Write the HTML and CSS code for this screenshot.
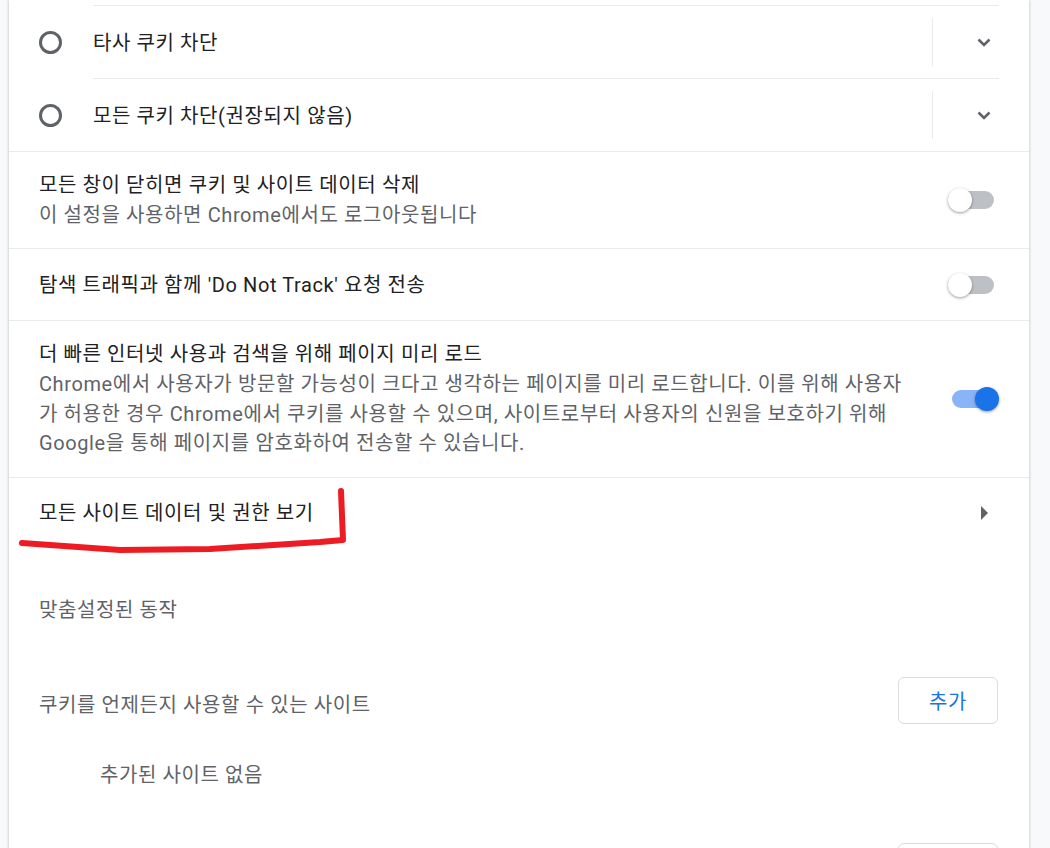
FILE: index.html
```html
<!DOCTYPE html>
<html lang="ko">
<head>
<meta charset="UTF-8">
<meta name="viewport" content="width=device-width, initial-scale=1.0">
<title>쿠키 및 기타 사이트 데이터</title>
<link rel="stylesheet" href="styles.css">
</head>
<body>
<div class="card">
  <div class="radio-row">
    <span class="radio"></span>
    <div class="radio-body">
      <div class="label">타사 쿠키 차단</div>
      <span class="sep"></span>
      <svg class="chevron" width="14" height="9" viewBox="0 0 14 9"><polyline points="1.5,1.5 7,7 12.5,1.5" fill="none" stroke="#5f6368" stroke-width="2.6"/></svg>
    </div>
  </div>
  <div class="radio-row">
    <span class="radio"></span>
    <div class="radio-body">
      <div class="label">모든 쿠키 차단(권장되지 않음)</div>
      <span class="sep"></span>
      <svg class="chevron" width="14" height="9" viewBox="0 0 14 9"><polyline points="1.5,1.5 7,7 12.5,1.5" fill="none" stroke="#5f6368" stroke-width="2.6"/></svg>
    </div>
  </div>

  <div class="row">
    <div class="text">
      <div>모든 창이 닫히면 쿠키 및 사이트 데이터 삭제</div>
      <div class="secondary">이 설정을 사용하면 Chrome에서도 로그아웃됩니다</div>
    </div>
    <div class="toggle"><span class="bar"></span><span class="knob"></span></div>
  </div>

  <div class="row">
    <div class="text">탐색 트래픽과 함께 'Do Not Track' 요청 전송</div>
    <div class="toggle"><span class="bar"></span><span class="knob"></span></div>
  </div>

  <div class="row">
    <div class="text wide">
      <div class="title">더 빠른 인터넷 사용과 검색을 위해 페이지 미리 로드</div>
      <div class="secondary">Chrome에서 사용자가 방문할 가능성이 크다고 생각하는 페이지를 미리 로드합니다. 이를 위해 사용자가 허용한 경우 Chrome에서 쿠키를 사용할 수 있으며, 사이트로부터 사용자의 신원을 보호하기 위해 Google을 통해 페이지를 암호화하여 전송할 수 있습니다.</div>
    </div>
    <div class="toggle on"><span class="bar"></span><span class="knob"></span></div>
  </div>

  <div class="row">
    <div class="text">모든 사이트 데이터 및 권한 보기</div>
    <svg class="arrow" width="7" height="14" viewBox="0 0 7 14"><polygon points="0,0 7,7 0,14" fill="#5f6368"/></svg>
  </div>

  <div class="section-title">맞춤설정된 동작</div>

  <div class="list-head">
    <div class="text">쿠키를 언제든지 사용할 수 있는 사이트</div>
    <button class="add-btn">추가</button>
  </div>
  <div class="empty">추가된 사이트 없음</div>

  <div class="list-head next">
    <div class="text">쿠키를 사용할 수 없는 사이트</div>
    <button class="add-btn">추가</button>
  </div>
</div>

<svg class="scribble" width="1050" height="848" viewBox="0 0 1050 848">
  <path d="M22 543 L50 545 L120 550 L210 549 L320 542 L343 540 L341 491" fill="none" stroke="#ed1c24" stroke-width="6" stroke-linecap="round" stroke-linejoin="round"/>
</svg>
</body>
</html>
```

FILE: styles.css
```css
body {
  margin: 0;
  position: relative;
  height: 848px;
  overflow: hidden;
  background-color: #f8f9fa;
  font-family: Roboto, "Noto Sans CJK KR", sans-serif;
  font-size: 20px;
  letter-spacing: 0.6px;
  line-height: 30px;
  color: #202124;
}
.card {
  margin-left: 9px;
  width: 1020px;
  padding-top: 5px;
  background: #fff;
  box-shadow: 0 0 3px rgba(60, 64, 67, 0.35);
  min-height: 900px;
}
.radio-row {
  display: flex;
  align-items: stretch;
  padding-left: 30px;
}
.radio {
  width: 23px;
  height: 23px;
  box-sizing: border-box;
  border: 3px solid #5f6368;
  border-radius: 50%;
  align-self: center;
  margin-right: 31px;
  margin-top: 1px;
}
.radio-body {
  flex: 1;
  display: flex;
  align-items: center;
  height: 72px;
  border-top: 1px solid #e8eaed;
  margin-right: 30px;
}
.radio-body .label {
  flex: 1;
  padding-top: 1px;
}
.sep {
  width: 1px;
  height: 48px;
  background: #e8eaed;
  margin-right: 44px;
}
.chevron {
  margin-right: 8px;
}
.row {
  display: flex;
  align-items: center;
  min-height: 72px;
  padding: 18px 30px 18px;
  box-sizing: border-box;
  border-top: 1px solid #e8eaed;
}
.row .text {
  flex: 1;
}
.row .text.wide {
  flex: 0 1 880px;
  margin-right: auto;
}
.row .title {
  margin-bottom: 1px;
}
.row .text.wide .secondary {
  line-height: 29.5px;
}
.secondary {
  color: #5f6368;
}
.toggle {
  position: relative;
  width: 51px;
  height: 24px;
  flex-shrink: 0;
}
.toggle .bar {
  position: absolute;
  left: 0;
  top: 3px;
  width: 46px;
  height: 18px;
  border-radius: 9px;
  background: #bdc1c6;
}
.toggle .knob {
  position: absolute;
  left: 0;
  top: 0;
  width: 24px;
  height: 24px;
  border-radius: 50%;
  background: #fff;
  box-shadow: 0 1px 3px rgba(0, 0, 0, 0.4);
}
.toggle.on .bar {
  left: 4px;
  width: 45px;
  background: #8ab4f8;
}
.toggle.on .knob {
  left: 27px;
  background: #1a73e8;
}
.arrow {
  margin-right: 11px;
}
.section-title {
  padding: 46px 30px 12px;
  color: #5f6368;
}
.list-head {
  display: flex;
  align-items: center;
  height: 72px;
  margin-top: 28px;
  padding: 0 31px 0 30px;
  color: #5f6368;
}
.list-head .text {
  flex: 1;
  padding-top: 9px;
}
.list-head.next {
  margin-top: 41px;
}
.add-btn {
  width: 100px;
  height: 47px;
  border: 1px solid #dadce0;
  border-radius: 6px;
  background: #fff;
  color: #1a73e8;
  font-family: inherit;
  font-size: 20px;
  letter-spacing: 0.6px;
}
.empty {
  padding-left: 91px;
  margin-top: 23px;
  color: #5f6368;
}
.scribble {
  position: absolute;
  left: 0;
  top: 0;
  pointer-events: none;
}
```
